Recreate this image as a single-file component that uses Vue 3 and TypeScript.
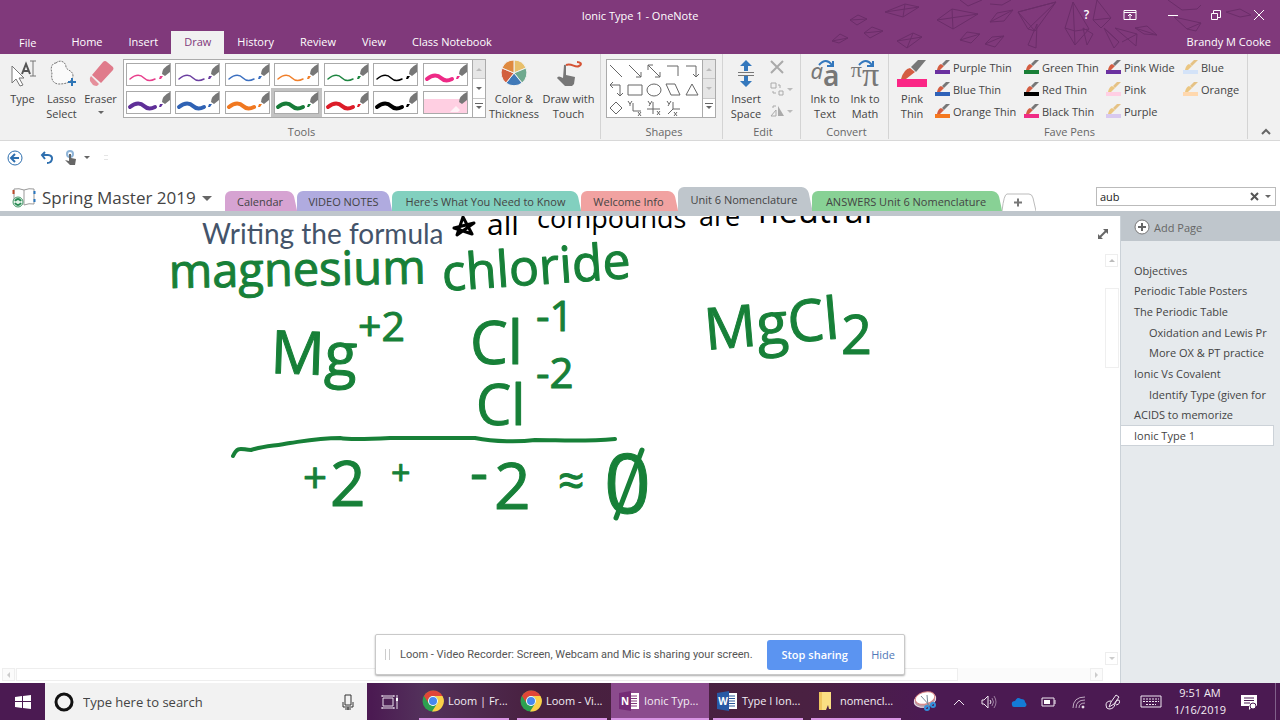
<script setup lang="ts">
import { ref } from 'vue'

interface Pen { name: string; color: string; wide: boolean; highlighter?: boolean }
interface FavePen { name: string; color: string; soft?: boolean }
interface Section { name: string; kind: string }
interface PageItem { name: string; sub?: boolean }
interface Ink { text: string; x: number; y: number; size: number; turn?: number }

const menus: string[] = ['Home', 'Insert', 'Draw', 'History', 'Review', 'View', 'Class Notebook']
const activeMenu = ref('Draw')
const search = ref('aub')
const taskSearch = ref('')

const pens: Pen[] = [
  { name: 'Pink thin', color: '#e83e8c', wide: false },
  { name: 'Purple thin', color: '#6b3fa0', wide: false },
  { name: 'Blue thin', color: '#3b6fc0', wide: false },
  { name: 'Orange thin', color: '#f07f2a', wide: false },
  { name: 'Green thin', color: '#1e8540', wide: false },
  { name: 'Black thin', color: '#000000', wide: false },
  { name: 'Pink wide', color: '#ee2a86', wide: true },
  { name: 'Purple wide', color: '#5f2f98', wide: true },
  { name: 'Blue wide', color: '#2f62b4', wide: true },
  { name: 'Orange wide', color: '#f07820', wide: true },
  { name: 'Green wide', color: '#177b38', wide: true },
  { name: 'Red wide', color: '#dc1c28', wide: true },
  { name: 'Black wide', color: '#000000', wide: true },
  { name: 'Pink highlighter', color: '#ffcfe2', wide: true, highlighter: true },
]
const activePen = ref('Green wide')

const shapes: string[] = [
  'M3 4 15 16', 'M3 4 15 16M15 11V16H10', 'M3 4 15 16M15 11V16H10M3 9V4H8', 'M3 5H14V15', 'M3 5H13V16M10 13 13 16 16 13',
  'M3 5H13V16M10 13 13 16 16 13M6 2 3 5 6 8', 'M2 5H16V15H2Z', 'M2 10A7 6 0 0 0 16 10 7 6 0 0 0 2 10', 'M2 4H11L16 15H7Z', 'M9 4 15 15H3Z',
  'M9 3 15 9 9 15 3 9Z', 'M7 4V12H15M2 2 4 5 6 2M4 5V7M12 13 15 17M15 13 12 17', 'M8 3V15M2 10H15M3 2 5 5M7 2 4 7M12 12 15 16M15 12 12 16', 'M9 3V10H16M9 10 4 15M3 2 5 5M7 2 4 7M10 13 13 17M13 13 10 17',
]

const favePens: FavePen[] = [
  { name: 'Purple Thin', color: '#6b31a0' }, { name: 'Blue Thin', color: '#2f62b8' }, { name: 'Orange Thin', color: '#f5781f' },
  { name: 'Green Thin', color: '#1a7f37' }, { name: 'Red Thin', color: '#000000' }, { name: 'Black Thin', color: '#f02c85' },
  { name: 'Pink Wide', color: '#6b31a0' }, { name: 'Pink', color: '#ffcfe4', soft: true }, { name: 'Purple', color: '#d8c9f0', soft: true },
  { name: 'Blue', color: '#d4e3f8', soft: true }, { name: 'Orange', color: '#ffd8ae', soft: true },
]

const sections: Section[] = [
  { name: 'Calendar', kind: 'pink' },
  { name: 'VIDEO NOTES', kind: 'violet' },
  { name: "Here's What You Need to Know", kind: 'teal' },
  { name: 'Welcome Info', kind: 'rose' },
  { name: 'Unit 6 Nomenclature', kind: 'current' },
  { name: 'ANSWERS Unit 6 Nomenclature', kind: 'green' },
]

const pages: PageItem[] = [
  { name: 'Objectives' }, { name: 'Periodic Table Posters' }, { name: 'The Periodic Table' },
  { name: 'Oxidation and Lewis Pr', sub: true }, { name: 'More OX & PT practice', sub: true },
  { name: 'Ionic Vs Covalent' }, { name: 'Identify Type (given for', sub: true },
  { name: 'ACIDS to memorize' }, { name: 'Ionic Type 1' },
]
const activePage = ref('Ionic Type 1')

const blackInk: Ink[] = [
  { text: 'all', x: 487, y: 19, size: 30 },
  { text: 'compounds', x: 537, y: 12, size: 27 },
  { text: 'are', x: 699, y: 10, size: 27 },
  { text: 'neutral', x: 758, y: 7, size: 34 },
]

const ink: Ink[] = [
  { text: 'magnesium', x: 169, y: 72, size: 47, turn: -1 },
  { text: 'chloride', x: 443, y: 75, size: 50, turn: -4 },
  { text: 'Mg', x: 270, y: 157, size: 60, turn: 2 },
  { text: '+2', x: 358, y: 125, size: 41 },
  { text: 'Cl', x: 470, y: 148, size: 60 },
  { text: '-1', x: 536, y: 115, size: 42 },
  { text: 'Cl', x: 476, y: 209, size: 56 },
  { text: '-2', x: 536, y: 172, size: 42 },
  { text: '+', x: 303, y: 277, size: 42 },
  { text: '2', x: 330, y: 290, size: 62 },
  { text: '+', x: 391, y: 269, size: 34 },
  { text: '-', x: 470, y: 276, size: 56 },
  { text: '2', x: 494, y: 293, size: 64 },
  { text: '≈', x: 558, y: 281, size: 46 },
  { text: '0', x: 604, y: 297, size: 82 },
  { text: 'MgCl', x: 706, y: 134, size: 58, turn: -5 },
  { text: '2', x: 841, y: 138, size: 54 },
]

const apps = [
  { name: 'Loom | Fr...', icon: 'chrome' },
  { name: 'Loom - Vi...', icon: 'chrome' },
  { name: 'Ionic Typ...', icon: 'onenote' },
  { name: 'Type I Ion...', icon: 'word' },
  { name: 'nomencl...', icon: 'folder' },
]
</script>

<template>
  <div class="app">
    <header class="titlebar">
      <svg class="kites" width="470" height="54" viewBox="0 0 470 54" aria-hidden="true">
        <path d="M75 12 95 4 109 7 93 17ZM75 12 109 7M95 4 93 17M40 20 48 15 57 19 47 25ZM40 20 57 19M54 33 62 27 73 31 60 38ZM54 33 73 31M22 41 30 34 38 38 29 43ZM22 41 38 38M87 41 103 33 112 37 97 48ZM87 41 112 37M103 33 97 48M127 20 142 9 168 14 143 29ZM127 20 168 14M142 9 143 29M150 0 158 6 172 0M180 4 192 5 201 0M180 22 187 13 203 10 194 21ZM180 22 203 10M150 40 157 32 170 34 161 43ZM150 40 170 34M175 44 182 37 194 36 185 47ZM175 44 194 36M208 12 218 29 225 31 246 2ZM208 12 246 2M208 12 225 31M218 29 246 2M255 28 263 2 279 29 265 45ZM255 28 265 31 279 29M263 2 265 45M227 24 218 45 226 48ZM287 0 283 20 291 28 301 18ZM283 20 301 18M273 28 283 34 277 45ZM294 28 304 48 309 42ZM294 28 309 42M305 28 327 34 326 46ZM312 42 327 34M325 28 337 26 347 35 334 34ZM325 28 347 35M358 0 372 10 387 9 391 5M364 17 377 29 386 31 391 23ZM377 29 391 23M416 12 430 9 441 15 430 17Z" />
      </svg>
      <h1 class="title">Ionic Type 1 - OneNote</h1>
      <div class="window-buttons">
        <button aria-label="Help">?</button>
        <button aria-label="Ribbon display options"><svg width="14" height="12" viewBox="0 0 14 12"><path d="M1 1.500H13V10.500H1ZM1 3.500H13M7 10V5M5 7 7 5 9 7" /></svg></button>
        <button aria-label="Minimize"><svg width="12" height="12" viewBox="0 0 12 12"><path d="M1 6.500H11" /></svg></button>
        <button aria-label="Restore"><svg width="12" height="12" viewBox="0 0 12 12"><path d="M1.500 4.500H7.500V10.500H1.500ZM3.500 4V1.500H10.500V8.500H8" /></svg></button>
        <button aria-label="Close"><svg width="12" height="12" viewBox="0 0 12 12"><path d="M1 1 11 11M11 1 1 11" /></svg></button>
      </div>
      <nav class="menus">
        <button class="file">File</button>
        <button v-for="m in menus" :key="m" :class="{ active: m === activeMenu }" @click="activeMenu = m">{{ m }}</button>
        <span class="user">Brandy M Cooke</span>
      </nav>
    </header>

    <section class="ribbon">
      <div class="group tools">
        <div class="controls">
          <button class="big narrow">
            <svg width="28" height="28" viewBox="0 0 28 28"><path d="M3 7V24L7 20 11 27 14 26 10 19H15Z" fill="#fff" stroke="#777" /><path d="M13 15 17 5 21 15M14 12H20" fill="none" stroke="#555" stroke-width="2" /><path d="M21 2H27M24 2V17M21 17H27" fill="none" stroke="#777" /></svg>
            <span>Type</span>
          </button>
          <button class="big narrow">
            <svg width="28" height="28" viewBox="0 0 28 28"><path d="M8 4C12 0 18 3 18 8 19 12 25 11 25 17 24 24 17 25 10 25 4 24 3 19 4 14 2 9 4 4 8 4Z" fill="#fafafa" stroke="#777" stroke-dasharray="2 1" /><path d="M24 19V27M20 23H28" stroke="#2e75b6" stroke-width="2" /></svg>
            <span>Lasso<br>Select</span>
          </button>
          <button class="big narrow">
            <svg width="28" height="28" viewBox="0 0 28 28"><path d="M16 3Q18 1 20 3L26 8Q27 10 26 11L14 24 5 16Z" fill="#e07b8b" /><path d="M4 17 12 25 10 27Q8 27 6 26L3 22Q2 19 4 17Z" fill="#e58f9b" /></svg>
            <span>Eraser</span><i class="caret"></i>
          </button>
          <div class="gallery pen-gallery">
            <div class="pen-grid">
              <button v-for="p in pens" :key="p.name" :aria-label="p.name" :class="{ chosen: p.name === activePen }" @click="activePen = p.name">
                <svg width="43" height="21" viewBox="0 0 43 21">
                  <template v-if="p.highlighter">
                    <rect y="7" width="43" height="14" :fill="p.color" /><path d="M26 20 32 14 36 18 34 20Z" fill="#fff" opacity=".7" />
                  </template>
                  <template v-else>
                    <path d="M3 15C9 10 14 11 17 14S24 17 28 15" fill="none" stroke-linecap="round" :stroke="p.color" :stroke-width="p.wide ? 4 : 1.500" />
                    <path d="M32 15 33 12 36 12 34 15Z" :fill="p.color" />
                  </template>
                  <path d="M35 10Q35 4 43 0V8L38 12Z" fill="#777" />
                </svg>
              </button>
            </div>
            <div class="scroller"><button aria-label="Previous pens" disabled><i class="up"></i></button><button aria-label="Next pens"><i class="caret"></i></button><button aria-label="All pens"><i class="caret line"></i></button></div>
          </div>
          <button class="big color">
            <svg width="28" height="28" viewBox="0 0 28 28"><g stroke="#f1f1f1"><path d="M14 14V1A13 13 0 0 1 26 9Z" fill="#e8c06c" /><path d="M14 14 26 9A13 13 0 0 1 22 24Z" fill="#6fa98e" /><path d="M14 14 22 24A13 13 0 0 1 6 24Z" fill="#4079b8" /><path d="M14 14 6 24A13 13 0 0 1 2 9Z" fill="#d2603f" /><path d="M14 14 2 9A13 13 0 0 1 14 1Z" fill="#df893f" /></g></svg>
            <span>Color &amp;<br>Thickness</span>
          </button>
          <button class="big touch">
            <svg width="30" height="28" viewBox="0 0 30 28"><path d="M10 6Q12 5 12 7V16L21 18 20 25 18 27H11L3 19Q4 16 9 19Z" fill="#777" /><path d="M12 6C18 4 21 9 25 7S26 3 23 3" fill="none" stroke="#d55334" stroke-width="2" /></svg>
            <span>Draw with<br>Touch</span>
          </button>
        </div>
        <p>Tools</p>
      </div>

      <div class="group shapes">
        <div class="controls">
          <div class="gallery shape-gallery">
            <div class="shape-grid">
              <button v-for="(s, i) in shapes" :key="i" :aria-label="'Shape ' + (i + 1)"><svg width="18" height="18" viewBox="0 0 18 18"><path :d="s" /></svg></button>
            </div>
            <div class="scroller"><button aria-label="Previous shapes" disabled><i class="up"></i></button><button aria-label="Next shapes" disabled><i class="caret"></i></button><button aria-label="All shapes"><i class="caret line"></i></button></div>
          </div>
        </div>
        <p>Shapes</p>
      </div>

      <div class="group edit">
        <div class="controls">
          <button class="big">
            <svg width="18" height="28" viewBox="0 0 18 28"><path d="M9 1 15 7H11V12H7V7H3ZM9 28 3 22H7V17H11V22H15Z" fill="#3478bd" /><path d="M1 13.500H17M1 16.500H17" stroke="#777" /></svg>
            <span>Insert<br>Space</span>
          </button>
          <div class="small-icons">
            <button aria-label="Delete"><svg width="14" height="14" viewBox="0 0 14 14"><path d="M1 1 13 13M13 1 1 13" stroke="#aaa" stroke-width="2" /></svg></button>
            <button aria-label="Arrange"><svg width="14" height="14" viewBox="0 0 14 14"><path d="M1 1H6V6H1ZM9 9H13V13H9ZM8 3H10V6M3 9V11H6" fill="none" stroke="#aaa" /></svg><i class="caret"></i></button>
            <button aria-label="Rotate"><svg width="14" height="14" viewBox="0 0 14 14"><path d="M8 2V12H14Z" fill="#aaa" /><path d="M6 6V12H1ZM3 4V2H6" fill="none" stroke="#aaa" /></svg><i class="caret"></i></button>
          </div>
        </div>
        <p>Edit</p>
      </div>

      <div class="group convert">
        <div class="controls">
          <button class="big"><span class="glyph"><svg width="20" height="10" viewBox="0 0 20 10"><path d="M2 6Q9-2 15 6M16 2V7H10" /></svg><i class="slant">a</i><b>a</b></span><span>Ink to<br>Text</span></button>
          <button class="big"><span class="glyph pi"><svg width="20" height="10" viewBox="0 0 20 10"><path d="M2 6Q9-2 15 6M16 2V7H10" /></svg><i>π</i><b>π</b></span><span>Ink to<br>Math</span></button>
        </div>
        <p>Convert</p>
      </div>

      <div class="group fave">
        <div class="controls">
          <button class="big">
            <svg width="30" height="28" viewBox="0 0 30 28"><path d="M4 20Q7 10 13 9L18 13 9 20Z" fill="#d45d42" /><path d="M14 8 21 1H29L19 13Z" fill="#777" /><rect y="20" width="30" height="8" fill="#fb2686" /></svg>
            <span>Pink<br>Thin</span>
          </button>
          <div class="fave-grid">
            <button v-for="f in favePens" :key="f.name">
              <svg width="15" height="14" viewBox="0 0 15 14"><path d="M2 10Q3 5 6 4L9 6 5 10Z" :fill="f.soft ? '#ebc681' : '#d45d42'" /><path d="M7 4 11 0H15L9 6Z" :fill="f.soft ? '#e5c285' : '#777'" /><rect y="10" width="15" height="4" :fill="f.color" /></svg>
              {{ f.name }}
            </button>
          </div>
        </div>
        <p>Fave Pens</p>
      </div>
      <button class="collapse" aria-label="Collapse ribbon"><svg width="10" height="8" viewBox="0 0 10 8"><path d="M1 6 5 2 9 6" /></svg></button>
    </section>

    <div class="quick">
      <button aria-label="Back"><svg width="16" height="16" viewBox="0 0 16 16"><circle cx="8" cy="8" r="7" fill="none" stroke="#2e6faf" /><path d="M12 8H4M8 4 4 8 8 12" fill="none" stroke="#2e6faf" stroke-width="2" /></svg></button>
      <button aria-label="Undo"><svg width="16" height="16" viewBox="0 0 16 16"><path d="M6 2 3 5 6 9M3 5H9C15 5 14 13 8 13" fill="none" stroke="#2e6faf" stroke-width="2" /></svg></button>
      <button aria-label="Touch mode"><svg width="14" height="16" viewBox="0 0 14 16"><circle cx="6" cy="4" r="3" fill="none" stroke="#8eb4d8" stroke-width="2" /><path d="M5 4H7V8L12 9 11 15H6L1 10 5 11Z" fill="#666" /></svg></button>
      <i class="caret"></i>
      <i class="handle"></i>
    </div>

    <div class="notebook">
      <button class="book">
        <svg width="24" height="22" viewBox="0 0 24 22"><path d="M12 3Q7 1 2 2V16M12 3Q17 1 22 2V17Q17 16 12 18Z" fill="#fff" stroke="#999" /><path d="M1.500 3V7" stroke="#bd4a2b" stroke-width="2" /><path d="M22.500 4V7M22.500 12V15" stroke="#2876c0" stroke-width="2" /><circle cx="6" cy="15" r="5" fill="#e5f3ea" stroke="#479a6b" /><path d="M3 14Q6 10 9 14M9 16Q6 20 3 16" fill="none" stroke="#278952" stroke-width="2" /></svg>
        <span>Spring Master 2019</span><i class="caret"></i>
      </button>
      <nav class="sections">
        <button v-for="s in sections" :key="s.name" :class="s.kind"><span>{{ s.name }}</span></button>
        <button class="add" aria-label="New section"><svg width="34" height="18" viewBox="0 0 34 18"><path d="M0 18Q2 1 5 1H27Q30 1 31 5L34 18" fill="#fff" stroke="#bbb" /><path d="M12 9.500H20M16 5.500V13.500" stroke="#777" stroke-width="2" /></svg></button>
      </nav>
      <div class="search">
        <input v-model="search" aria-label="Search notebooks">
        <button aria-label="Clear search"><svg width="9" height="9" viewBox="0 0 9 9"><path d="M1 1 8 8M8 1 1 8" stroke="#555" stroke-width="2" /></svg></button>
        <i class="caret"></i>
      </div>
    </div>

    <main class="workspace">
      <section class="canvas">
        <svg class="note" width="1100" height="440" viewBox="0 0 1100 440">
          <text class="heading" x="202" y="28">Writing the formula</text>
          <path class="star" d="M457 19 463 1 472 18 454 12 474 7Z" />
          <g class="black-ink">
            <text v-for="t in blackInk" :key="t.text" :x="t.x" :y="t.y" :font-size="t.size">{{ t.text }}</text>
          </g>
          <g class="green-ink">
            <text v-for="(t, i) in ink" :key="i" :x="t.x" :y="t.y" :font-size="t.size" :transform="`rotate(${t.turn ?? 0} ${t.x} ${t.y})`">{{ t.text }}</text>
          </g>
          <path class="rule" d="M233 240C238 229 242 234 251 234C263 230 275 230 290 227C310 224 320 222 340 222C350 224 370 223 390 222H475C495 226 520 226 535 224C560 224 580 226 615 223" />
          <path class="slash" d="M642 234 616 302" />
        </svg>
        <button class="expand" aria-label="Full page view"><svg width="12" height="12" viewBox="0 0 12 12"><path d="M2 10 10 2" stroke="#666" stroke-width="2" /><path d="M6 1H11V6ZM1 6V11H6Z" fill="#666" /></svg></button>
        <div class="vbar"><button aria-label="Scroll up"><i class="up"></i></button><span></span><button aria-label="Scroll down"><i class="caret"></i></button></div>
        <div class="hbar"><button aria-label="Scroll left"><i class="left"></i></button><span></span><button aria-label="Scroll right"><i class="right"></i></button></div>
      </section>
      <aside>
        <button class="add-page"><svg width="16" height="16" viewBox="0 0 16 16"><circle cx="8" cy="8" r="7" fill="#fff" stroke="#777" /><path d="M4 8H12M8 4V12" stroke="#666" stroke-width="2" /></svg>Add Page</button>
        <nav>
          <button v-for="p in pages" :key="p.name" :class="{ sub: p.sub, active: p.name === activePage }" @click="activePage = p.name">{{ p.name }}</button>
        </nav>
      </aside>
      <div class="sharing" role="status">
        <i class="grip"></i>
        <span>Loom - Video Recorder: Screen, Webcam and Mic is sharing your screen.</span>
        <button class="stop">Stop sharing</button>
        <a href="#">Hide</a>
      </div>
    </main>

    <footer class="taskbar">
      <button class="start" aria-label="Start"><svg width="16" height="16" viewBox="0 0 16 16"><path d="M0 3 7 2V7H0ZM8 2 16 1V7H8ZM0 8H7V14L0 13ZM8 8H16V15L8 14Z" fill="#fff" /></svg></button>
      <label class="task-search">
        <svg width="20" height="20" viewBox="0 0 20 20"><circle cx="10" cy="10" r="8" fill="none" stroke="#111" stroke-width="3" /></svg>
        <input v-model="taskSearch" placeholder="Type here to search" aria-label="Type here to search">
        <svg width="12" height="16" viewBox="0 0 12 16"><path d="M3 1H9V11H3ZM1 8V13H11V8M6 13V16M3 15H9" fill="none" stroke="#333" /></svg>
      </label>
      <button class="task-view" aria-label="Task view"><svg width="18" height="16" viewBox="0 0 18 16"><path d="M2 4H12V12H2ZM1 1V3M13 1V3M1 2H13M1 13V15M13 13V15M1 14H13M16 1V15" fill="none" stroke="#e9deeb" /><path d="M15 4H17V7H15Z" fill="#fff" /></svg></button>
      <button v-for="a in apps" :key="a.name" class="task" :class="[a.icon, { active: a.icon === 'onenote' }]">
        <svg width="22" height="22" viewBox="0 0 22 22">
          <template v-if="a.icon === 'chrome'"><circle cx="11" cy="11" r="10.500" fill="#2da050" /><path d="M2 6A10.500 10.500 0 0 1 20.500 6H11A5 5 0 0 0 6.500 13Z" fill="#e04638" /><path d="M20.500 6A10.500 10.500 0 0 1 10 21.500L15.500 13A5 5 0 0 0 12 6Z" fill="#fbd049" /><circle cx="11" cy="11" r="5" fill="#fff" /><circle cx="11" cy="11" r="4" fill="#4788ef" /></template>
          <template v-else-if="a.icon === 'folder'"><path d="M5 2H11V20H5Z" fill="#efc75f" /><path d="M8 2H17V19H15L14 15 12 20H8Z" fill="#fadf83" /></template>
          <template v-else>
            <path d="M10 3H21V19H10Z" fill="#fff" /><path d="M12 6H19M12 8.500H19M12 11H19M12 13.500H19M12 16H19" :stroke="a.icon === 'word' ? '#2b579a' : '#80397b'" />
            <path d="M1 3 13 1V21L1 19Z" :fill="a.icon === 'word' ? '#2859a5' : '#742b76'" />
            <text x="7" y="15" text-anchor="middle" class="mark">{{ a.icon === 'word' ? 'W' : 'N' }}</text>
          </template>
        </svg>
        <span>{{ a.name }}</span>
      </button>
      <div class="tray">
        <button class="snip" aria-label="Snipping tool"><svg width="24" height="22" viewBox="0 0 24 22"><ellipse cx="12" cy="9" rx="11" ry="7" fill="#b89ba5" transform="rotate(-15 12 9)" /><ellipse cx="12" cy="7" rx="10" ry="6" fill="#fff" stroke="#d98080" transform="rotate(-15 12 7)" /><path d="M8 5 17 15M14 4 15 15" stroke="#788795" /><circle cx="14" cy="17" r="2" fill="none" stroke="#328fdb" stroke-width="2" /><circle cx="20" cy="14" r="2" fill="none" stroke="#328fdb" stroke-width="2" /></svg></button>
        <button aria-label="Show hidden icons"><svg width="12" height="8" viewBox="0 0 12 8"><path d="M1 7 6 2 11 7" /></svg></button>
        <button aria-label="Volume"><svg width="16" height="14" viewBox="0 0 16 14"><path d="M1 5H3L7 1V13L3 9H1ZM9 5Q11 7 9 9" /><path d="M11 3Q14 7 11 11M13 1Q17 7 13 13" opacity=".5" /></svg></button>
        <button aria-label="OneDrive"><svg width="16" height="12" viewBox="0 0 16 12"><path d="M1 9Q0 5 4 5 6 0 10 3 14 3 14 6 17 9 14 11H3Q1 11 1 9Z" fill="#147bd6" stroke="none" /></svg></button>
        <button aria-label="Battery"><svg width="16" height="10" viewBox="0 0 16 10"><path d="M1 1H13V9H1ZM14 3V7" /><path d="M3 3H9V7H3Z" fill="#fff" stroke="none" /></svg></button>
        <button aria-label="Wi-Fi"><svg width="14" height="14" viewBox="0 0 14 14"><path d="M1 13Q1 2 13 2M4 13Q4 5 13 5M7 13Q7 8 13 8" opacity=".7" /><circle cx="11" cy="12" r="1" fill="#fff" /></svg></button>
        <button class="pen" aria-label="Pen workspace"><svg width="16" height="16" viewBox="0 0 16 16"><path d="M4 13 6 8 11 1 14 3 9 10ZM6 7Q1 7 1 11T4 15Q9 15 10 10T14 6Q16 10 11 11" /></svg></button>
        <button class="keyboard" aria-label="Touch keyboard"><svg width="22" height="13" viewBox="0 0 22 13"><path d="M1 1H21V12H1Z" /><path d="M3 4H19M3 6.500H19M6 9.500H16" stroke-dasharray="2 1" /></svg></button>
        <span class="clock">9:51 AM<br>1/16/2019</span>
        <button class="pen" aria-label="Notifications"><svg width="16" height="16" viewBox="0 0 16 16"><path d="M0 1H16V12H12L8 16V12H0Z" fill="#fff" stroke="none" /><path d="M3 4H13M3 6.500H13M3 9H9" stroke="#4b1a52" /><circle cx="12" cy="12" r="3" fill="#fff" stroke="#4b1a52" /></svg></button>
        <button class="desktop" aria-label="Show desktop"></button>
      </div>
    </footer>
  </div>
</template>

<style>
body { margin: 0; background: #fff; }
</style>

<style scoped>
* { box-sizing: border-box; }
.app { display: flex; flex-direction: column; min-height: 100vh; overflow: hidden; font: 11px/15px "Open Sans", "Noto Sans", sans-serif; color: #444; }
button { border: 0; padding: 0; margin: 0; background: none; font: inherit; color: inherit; cursor: pointer; }
p { margin: 0; }
svg { display: block; flex: none; }
.caret, .up { display: block; width: 0; height: 0; border: 3px solid transparent; border-top-color: #666; border-bottom: 0; }
.up { border-top: 0; border-bottom: 3px solid #bbb; }
.left, .right { display: block; border: 3px solid transparent; border-right-color: #ccc; border-left: 0; }
.right { border-right: 0; border-left: 3px solid #ccc; }

.titlebar { position: relative; height: 54px; background: #80397b; color: #fff; display: flex; flex-direction: column; justify-content: flex-end; }
.kites { position: absolute; right: 0; top: 0; fill: none; stroke: #6b2d69; }
.title { position: absolute; left: 0; right: 0; top: 8px; margin: 0; text-align: center; font-size: 11px; line-height: 16px; font-weight: 400; }
.window-buttons { position: absolute; top: 0; right: 0; display: flex; }
.window-buttons button { width: 43px; height: 29px; display: flex; align-items: center; justify-content: center; font-weight: 600; font-size: 12px; }
.window-buttons svg { fill: none; stroke: #fff; }
.menus { position: relative; display: flex; height: 23px; }
.menus button { padding: 0 13px 2px; }
.menus .file { padding: 0 22px 0 19px; }
.menus .active { background: #f1f1f1; color: #80397b; }
.user { margin-left: auto; padding: 3px 9px 0 0; }

.ribbon { display: flex; height: 87px; background: #f1f1f1; border-bottom: 1px solid #d8d8d8; }
.group { display: flex; flex-direction: column; border-right: 1px solid #d4d4d4; padding-top: 5px; margin-bottom: 1px; }
.group p { text-align: center; margin-top: auto; line-height: 14px; color: #666; }
.controls { display: flex; height: 64px; }
.big { display: flex; flex-direction: column; align-items: center; line-height: 15px; width: 40px; white-space: nowrap; }
.big > span:not(.glyph) { margin-top: 4px; }
.big .caret { margin-top: 5px; }
.tools { width: 601px; padding-left: 3px; }
.narrow { width: 39px; }
.color { width: 56px; }
.touch { width: 53px; }
.gallery { display: flex; background: #fff; border: 1px solid #ababab; height: 59px; }
.pen-gallery { width: 363px; margin-left: 3px; }
.pen-grid { display: grid; grid-template-columns: repeat(7, 1fr); flex: 1; padding: 3px 0 0 2px; row-gap: 5px; align-content: start; }
.pen-grid button { width: 45px; height: 23px; border: 1px solid #aaa; background: #fff; }
.pen-grid .chosen { outline: 3px solid #c3c3c3; }
.scroller { display: flex; flex-direction: column; width: 13px; border-left: 1px solid #ababab; }
.scroller button { flex: 1; display: flex; align-items: center; justify-content: center; border-bottom: 1px solid #c8c8c8; }
.scroller button:last-child { border-bottom: 0; }
.scroller button:disabled { background: #e6e6e6; }
.scroller button:disabled .caret { border-top-color: #bbb; }
.line { position: relative; }
.line::before { content: ""; position: absolute; left: -4px; top: -6px; width: 8px; height: 1px; background: #666; }
.shapes { width: 122px; padding-left: 5px; }
.shape-gallery { width: 110px; }
.shape-grid { display: grid; grid-template-columns: repeat(5, 1fr); grid-auto-rows: 19px; flex: 1; }
.shape-grid svg { fill: none; stroke: #666; }
.edit { width: 78px; padding-left: 3px; }
.small-icons { display: flex; flex-direction: column; gap: 8px; padding: 1px 0 0 4px; }
.small-icons button { display: flex; align-items: center; gap: 3px; }
.small-icons .caret { border-top-color: #bbb; }
.convert { width: 88px; padding-left: 4px; }
.glyph { position: relative; height: 28px; display: flex; align-items: flex-end; color: #777; font: 28px/24px "Noto Sans", sans-serif; }
.glyph i { font-size: 22px; line-height: 34px; }
.glyph i:not(.slant) { font-style: normal; }
.glyph b { font-weight: 600; }
.pi { font-family: "Liberation Serif", serif; font-size: 34px; }
.pi b { font-weight: 400; }
.glyph svg { position: absolute; left: 6px; top: 0; fill: none; stroke: #3478bd; stroke-width: 2; }
.fave { width: 359px; padding-left: 3px; }
.fave-grid { display: grid; grid-template-rows: repeat(3, 22px); grid-template-columns: 89px 82px 77px auto; grid-auto-flow: column; margin-left: 3px; margin-top: -3px; }
.fave-grid button { display: flex; align-items: center; gap: 3px; white-space: nowrap; }
.collapse { margin: auto 9px 4px auto; }
.collapse svg { fill: none; stroke: #666; stroke-width: 2; }

.quick { display: flex; align-items: center; height: 33px; padding-left: 7px; }
.quick button + button { margin-left: 16px; }
.quick button:nth-child(3) { margin-left: 9px; }
.quick .caret { margin-left: 6px; }
.handle { width: 4px; height: 5px; margin-left: 14px; border: solid #e5e5e5; border-width: 1px 0; }

.notebook { display: flex; align-items: flex-end; height: 42px; border-bottom: 5px solid #bfc6cc; }
.book { display: flex; align-items: center; width: 225px; padding: 0 0 1px 12px; font-size: 17px; line-height: 24px; white-space: nowrap; }
.book span { margin-left: 6px; }
.book .caret { border-width: 5px 5px 0; margin-left: 6px; }
.sections { display: flex; align-items: flex-end; color: #444; }
.sections button { position: relative; height: 20px; white-space: nowrap; padding-right: 2px; }
.sections span { position: relative; z-index: 2; }
.sections button:not(.add)::before { content: ""; position: absolute; inset: 0 12px 0 0; background: var(--tab); border-radius: 6px 0 0 0; }
.sections button:not(.add)::after { content: ""; position: absolute; top: 0; bottom: 0; right: 2px; width: 18px; background: var(--tab); border-radius: 0 6px 0 0; transform: skewX(12deg); }
.pink { --tab: #d6a3d2; width: 72px; }
.violet { --tab: #b0abdf; width: 95px; }
.teal { --tab: #82d0bf; width: 189px; }
.rose { --tab: #f1a2a1; width: 97px; }
.sections .current { --tab: #bfc6cc; width: 134px; height: 24px; }
.green { --tab: #88d195; width: 190px; }
.sections .add { padding: 0; height: 18px; }
.search { margin: 0 4px 5px auto; width: 180px; height: 19px; border: 1px solid #bbb; display: flex; align-items: center; gap: 6px; padding-right: 4px; }
.search input { flex: 1; min-width: 0; border: 0; outline: 0; padding: 0 3px; font: inherit; color: #222; }

.workspace { flex: 1; display: flex; position: relative; min-height: 467px; }
.canvas { flex: 1; position: relative; overflow: hidden; border-right: 1px solid #cbd2d8; }
.note { position: absolute; left: 0; top: 0; }
.heading { font: 28px "Lato", sans-serif; fill: #44546a; }
.black-ink { font-family: "Open Sans", sans-serif; fill: #000; }
.star { fill: none; stroke: #000; stroke-width: 3; stroke-linejoin: round; }
.green-ink { font-family: "Open Sans", sans-serif; fill: #178038; stroke: #178038; stroke-width: 1; stroke-linejoin: round; }
.rule { fill: none; stroke: #178038; stroke-width: 4; stroke-linecap: round; }
.slash { stroke: #178038; stroke-width: 5; stroke-linecap: round; }
.expand { position: absolute; right: 11px; top: 12px; }
.vbar { position: absolute; right: 1px; top: 38px; bottom: 18px; width: 14px; display: flex; flex-direction: column; }
.vbar span { height: 80px; margin: 21px 0 auto; border: 1px solid #efefef; }
.vbar button, .hbar button { width: 13px; height: 13px; flex: none; border: 1px solid #eee; display: flex; align-items: center; justify-content: center; }
.vbar .caret { border-top-color: #ccc; }
.hbar { position: absolute; left: 2px; right: 17px; bottom: 2px; height: 13px; display: flex; background: #fbfbfb; }
.hbar span { flex: 1; margin-right: 132px; margin-left: 1px; border: 1px solid #eee; background: #fff; }
aside { width: 159px; background: #e6eaed; }
.add-page { display: flex; align-items: center; gap: 4px; width: 100%; height: 25px; padding: 0 0 3px 13px; background: #bfc6cc; color: #666; }
aside nav { display: grid; grid-auto-rows: 1fr; height: 186px; margin-top: 19px; }
aside nav button { text-align: left; padding-left: 13px; margin-right: 6px; white-space: nowrap; overflow: hidden; }
aside nav .sub { padding-left: 28px; }
aside nav .active { background: #fff; border: 1px solid #ccd2d8; border-left: 0; }
.sharing { position: absolute; left: 50%; bottom: 8px; transform: translateX(-50%); display: flex; align-items: center; height: 41px; padding: 0 9px; background: #fff; border: 1px solid #c9c9c9; border-radius: 2px; box-shadow: 0 1px 2px #0005; white-space: nowrap; width: 530px; }
.sharing span { font: 11px/15px "Roboto", sans-serif; color: #555; }
.grip { width: 5px; height: 11px; border: solid #ccc; border-width: 0 1px; margin-right: 10px; }
.stop { margin-left: auto; width: 95px; height: 30px; border-radius: 3px; background: #5b94f1; color: #fff; font-weight: 600; }
.sharing a { color: #5078b8; text-decoration: none; margin-left: 9px; }

.taskbar { display: flex; height: 37px; background: linear-gradient(90deg, #4b1a52 0, #4b1a52 29%, #53315b 33%, #48203f 42%, #4a2142 63%, #4b1a52 72%); color: #f3edf4; }
.start { width: 45px; display: grid; place-items: center; }
.task-search { width: 322px; background: #f2f2f2; display: flex; align-items: center; padding: 0 13px 0 9px; }
.task-search input { flex: 1; min-width: 0; border: 0; outline: 0; background: none; font: 13px/20px "Open Sans", sans-serif; color: #333; padding: 0 0 0 9px; }
.task-search input::placeholder { color: #444; opacity: 1; }
.task-view { width: 46px; display: grid; place-items: center; }
.task { width: 90px; margin: 0 2px 0 6px; display: flex; align-items: center; gap: 4px; padding-left: 3px; border-bottom: 2px solid #d995e5; white-space: nowrap; }
.task.active { background: #8b4b8d; width: 98px; margin: 0 -2px 0 2px; padding-left: 7px; }
.mark { font: 700 10px "Open Sans", sans-serif; fill: #fff; }
.tray { display: flex; align-items: stretch; margin-left: auto; }
.tray button { width: 30px; display: flex; align-items: center; justify-content: center; }
.tray svg { fill: none; stroke: #efe6f0; }
.tray .snip, .tray .pen, .tray .keyboard { width: 38px; }
.clock { width: 60px; text-align: center; line-height: 17px; padding-top: 1px; }
.tray .desktop { width: 5px; margin-left: 7px; border-left: 1px solid #80608a; }
</style>
